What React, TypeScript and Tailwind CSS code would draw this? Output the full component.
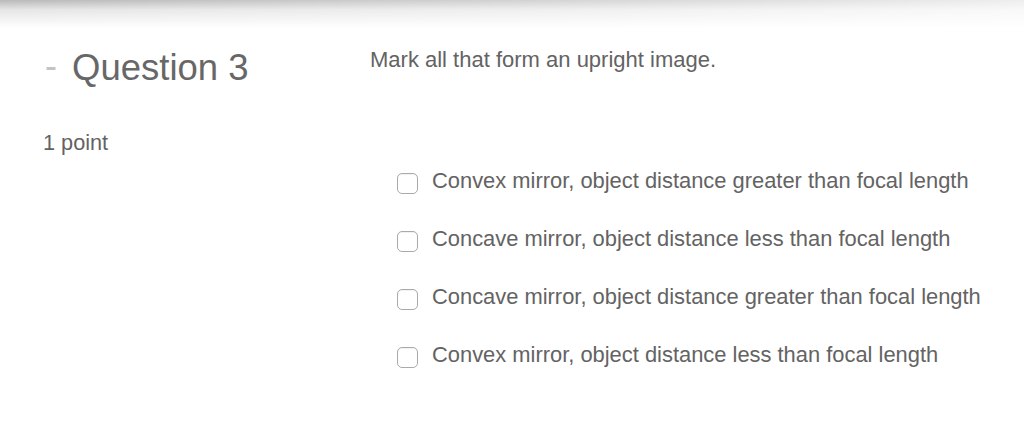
import React from "react";

const options = [
  "Convex mirror, object distance greater than focal length",
  "Concave mirror, object distance less than focal length",
  "Concave mirror, object distance greater than focal length",
  "Convex mirror, object distance less than focal length",
];

export default function App() {
  return (
    <div
      className="relative w-[1024px] h-[433px] bg-white overflow-hidden text-[#636363]"
      style={{ fontFamily: '"Liberation Sans", Arial, sans-serif' }}
    >
      <div className="absolute top-0 left-0 right-0 h-[28px] pointer-events-none bg-[linear-gradient(to_right,rgba(255,255,255,0)_0%,rgba(255,255,255,0.35)_50%,rgba(255,255,255,0.75)_100%),linear-gradient(to_bottom,#b9b9b9_0%,#e6e6e6_35%,#ffffff_100%)]" />
      <div className="flex pt-[43px]">
        <div className="w-[370px] shrink-0 pl-[43px]">
          <div className="flex items-center h-[50px]">
            <span className="text-[36px] text-[#c4c4c4] leading-none mr-[15px] ml-[2px] -mt-[4px]">-</span>
            <span className="text-[36.5px] leading-none text-[#676767]">Question 3</span>
          </div>
          <div className="mt-[39px] text-[21.7px] leading-none">1 point</div>
        </div>
        <div className="pt-[6px]">
          <div className="text-[22px] leading-none">Mark all that form an upright image.</div>
          <div className="mt-[99px] ml-[27px] flex flex-col gap-[37px]">
            {options.map((o) => (
              <label key={o} className="flex items-center h-[21px]">
                <span className="w-[21px] h-[21px] mt-[5px] rounded-[5px] border border-[#aaaaaa] bg-white shrink-0 shadow-[inset_0_1px_1px_rgba(0,0,0,0.06)]" />
                <span className="ml-[14px] text-[21.9px] leading-none">{o}</span>
              </label>
            ))}
          </div>
        </div>
      </div>
    </div>
  );
}
